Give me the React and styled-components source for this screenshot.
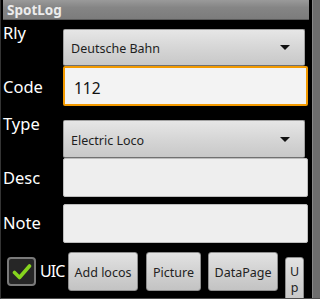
import React from 'react'
import styled, { createGlobalStyle } from 'styled-components'

const Global = createGlobalStyle`
  html, body {
    margin: 0;
    padding: 0;
    background: #000;
  }
  body {
    font-family: "Noto Sans", "Open Sans", sans-serif;
  }
`

const Screen = styled.div`
  width: 320px;
  height: 299px;
  box-sizing: border-box;
  display: flex;
  background: #000;
  border-left: 1px solid #343434;
  border-bottom: 1px solid #4e4e4e;
  overflow: hidden;
`

const Main = styled.div`
  width: 311px;
  display: flex;
  flex-direction: column;
`

const Strip = styled.div`
  flex: 1;
  background: #6d6d6d;
  border-left: 1px solid #888;
`

const TitleBar = styled.div`
  margin-left: 2px;
  width: 306px;
  height: 22px;
  box-sizing: border-box;
  background: linear-gradient(#9a9a9a, #858585 40%, #7c7c7c);
  border-bottom: 1px solid #5a5a5a;
  display: flex;
  align-items: center;
  padding: 1px 0 0 4px;
  color: #ececec;
  font-size: 13.5px;
  font-weight: 700;
`

const Row = styled.div`
  display: flex;
  height: ${p => p.$h}px;
`

const Label = styled.div`
  width: 62px;
  box-sizing: border-box;
  padding-left: 2px;
  padding-top: ${p => p.$top}px;
  color: #fff;
  font-size: 16.5px;
  line-height: 20px;
`

const Spinner = styled.div`
  margin-top: ${p => p.$top}px;
  width: 242px;
  height: ${p => p.$h}px;
  box-sizing: border-box;
  background: linear-gradient(#e6e6e6, #d6d6d6 50%, #c8c8c8);
  border: 1px solid #a2a2a2;
  border-bottom-color: #707070;
  border-radius: 2px;
  display: flex;
  align-items: center;
  padding: 2px 14px 0 7px;
  font-size: 12.5px;
  color: #1e1e1e;
`

const SpinnerText = styled.span`
  flex: 1;
`

const Arrow = styled.span`
  width: 0;
  height: 0;
  border-left: 5px solid transparent;
  border-right: 5px solid transparent;
  border-top: 5px solid #111;
  margin-top: -2px;
`

const Input = styled.div`
  margin-top: ${p => p.$top || 0}px;
  width: 245px;
  height: ${p => p.$h}px;
  box-sizing: border-box;
  background: ${p => (p.$focus ? '#f3f3f3' : '#eeeeee')};
  border: ${p => (p.$focus ? '2px solid #f39a00' : '1px solid #bdbdbd')};
  border-radius: 2px;
  display: flex;
  align-items: center;
  padding: 3px 0 0 ${p => (p.$focus ? 9 : 10)}px;
  font-size: 15.5px;
  color: #111;
`

const BottomBar = styled.div`
  display: flex;
  align-items: flex-start;
`

const Check = styled.div`
  margin: 14px 0 0 6px;
  width: 29px;
  height: 29px;
  box-sizing: border-box;
  background: #262626;
  border: 2px solid #7a7a7a;
  border-radius: 4px;
  display: flex;
  align-items: center;
  justify-content: center;
`

const CheckLabel = styled.div`
  width: 32px;
  margin-top: 18px;
  padding-left: 4px;
  box-sizing: border-box;
  color: #fff;
  font-size: 16px;
  letter-spacing: -0.9px;
  line-height: 20px;
`

const Button = styled.div`
  margin-top: ${p => p.$top || 9}px;
  margin-right: ${p => p.$gap || 0}px;
  width: ${p => p.$w}px;
  height: ${p => p.$h || 39}px;
  box-sizing: border-box;
  background: linear-gradient(#e2e2e2, #d2d2d2 50%, #c3c3c3);
  border: 1px solid #8e8e8e;
  border-radius: 3px;
  display: flex;
  align-items: center;
  justify-content: center;
  padding-top: 1px;
  font-size: 12.5px;
  color: #222;
  white-space: nowrap;
`

const UpButton = styled(Button)`
  align-items: flex-start;
  padding: 6px 2px 0;
  white-space: normal;
  word-break: break-all;
  text-align: center;
  line-height: 16px;
`

export default function App() {
  return (
    <>
      <Global />
      <Screen>
        <Main>
          <TitleBar>SpotLog</TitleBar>
          <Row $h={47}>
            <Label $top={2.6}>Rly</Label>
            <Spinner $top={9} $h={37}>
              <SpinnerText>Deutsche Bahn</SpinnerText>
              <Arrow />
            </Spinner>
          </Row>
          <Row $h={40}>
            <Label $top={10.6}>Code</Label>
            <Input $h={40} $focus>112</Input>
          </Row>
          <Row $h={53}>
            <Label $top={7.6}>Type</Label>
            <Spinner $top={14} $h={38}>
              <SpinnerText>Electric Loco</SpinnerText>
              <Arrow />
            </Spinner>
          </Row>
          <Row $h={39}>
            <Label $top={9.6}>Desc</Label>
            <Input $h={39} />
          </Row>
          <Row $h={46}>
            <Label $top={15.6}>Note</Label>
            <Input $top={7} $h={39} />
          </Row>
          <BottomBar>
            <Check>
              <svg width="20" height="18" viewBox="0 0 20 18">
                <path d="M2.5 9.5 L7.5 14.5 L17.5 3" fill="none" stroke="#86d41e" strokeWidth="3.6" strokeLinecap="round" strokeLinejoin="round" />
              </svg>
            </Check>
            <CheckLabel>UIC</CheckLabel>
            <Button $w={70} $gap={8}>Add locos</Button>
            <Button $w={55} $gap={7}>Picture</Button>
            <Button $w={70} $gap={7}>DataPage</Button>
            <UpButton $w={19} $top={14} $h={50}>Up</UpButton>
          </BottomBar>
        </Main>
        <Strip />
      </Screen>
    </>
  )
}
